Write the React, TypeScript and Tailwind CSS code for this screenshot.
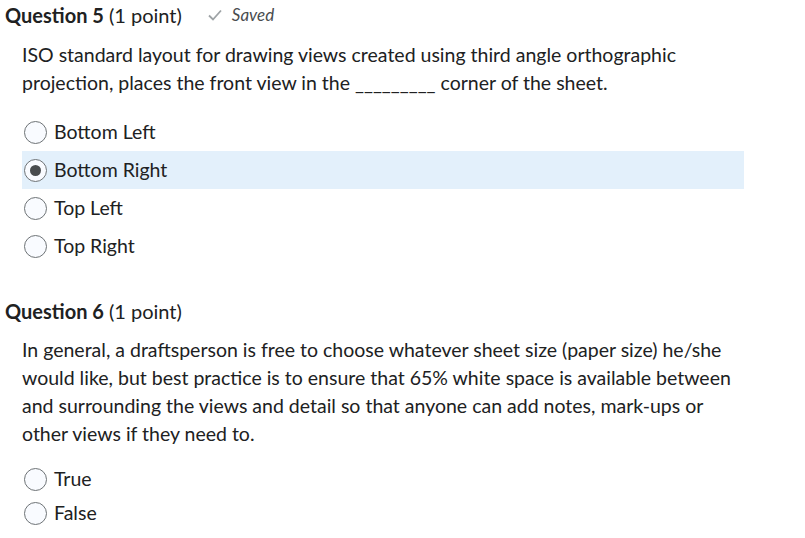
import React from "react";

function Radio({ checked }: { checked?: boolean }) {
  return (
    <span className="flex h-[23px] w-[23px] shrink-0 items-center justify-center rounded-full border border-[#6e7376] bg-[#f9fbff]">
      {checked && <span className="h-[11px] w-[11px] rounded-full bg-[#494c4e]" />}
    </span>
  );
}

function Option({ label, checked, h }: { label: string; checked?: boolean; h: string }) {
  return (
    <div className={`flex items-center gap-[7px] pl-[2px] ${h} ${checked ? "bg-[#e3f0fb]" : ""}`}>
      <Radio checked={checked} />
      <span>{label}</span>
    </div>
  );
}

export default function App() {
  return (
    <div className="min-h-[538px] bg-white text-[19.5px] leading-[28px] text-[#202122]" style={{ fontFamily: "Lato, 'Noto Sans', sans-serif" }}>
      <div className="pl-[5px] pt-[1px] flex items-center text-[20px]">
        <span className="font-bold">Question 5</span>
        <span className="ml-[5px]">(1 point)</span>
        <span className="ml-[25px] flex items-center gap-[9px] text-[17px] italic text-[#494c4e]">
          <svg width="16" height="14" viewBox="0 0 16 14"><path d="M2 7.5 L6 11.5 L14 2.5" fill="none" stroke="#9ea3a6" strokeWidth="1.8" /></svg>
          Saved
        </span>
      </div>
      <p className="pl-[22px] mt-[12px] w-[744px]">
        ISO standard layout for drawing views created using third angle orthographic projection, places the front view in the _________ corner of the sheet.
      </p>
      <div className="mt-[16px] ml-[22px] w-[722px]">
        <Option label="Bottom Left" h="h-[38px]" />
        <Option label="Bottom Right" checked h="h-[38px]" />
        <Option label="Top Left" h="h-[38px]" />
        <Option label="Top Right" h="h-[38px]" />
      </div>
      <div className="pl-[5px] mt-[32px] text-[20px]">
        <span className="font-bold">Question 6</span>
        <span className="ml-[5px]">(1 point)</span>
      </div>
      <p className="pl-[22px] mt-[11px] w-[744px]">
        In general, a draftsperson is free to choose whatever sheet size (paper size) he/she would like, but best practice is to ensure that 65% white space is available between and surrounding the views and detail so that anyone can add notes, mark-ups or other views if they need to.
      </p>
      <div className="mt-[14px] ml-[22px] w-[722px]">
        <Option label="True" h="h-[34px]" />
        <Option label="False" h="h-[34px]" />
      </div>
    </div>
  );
}
